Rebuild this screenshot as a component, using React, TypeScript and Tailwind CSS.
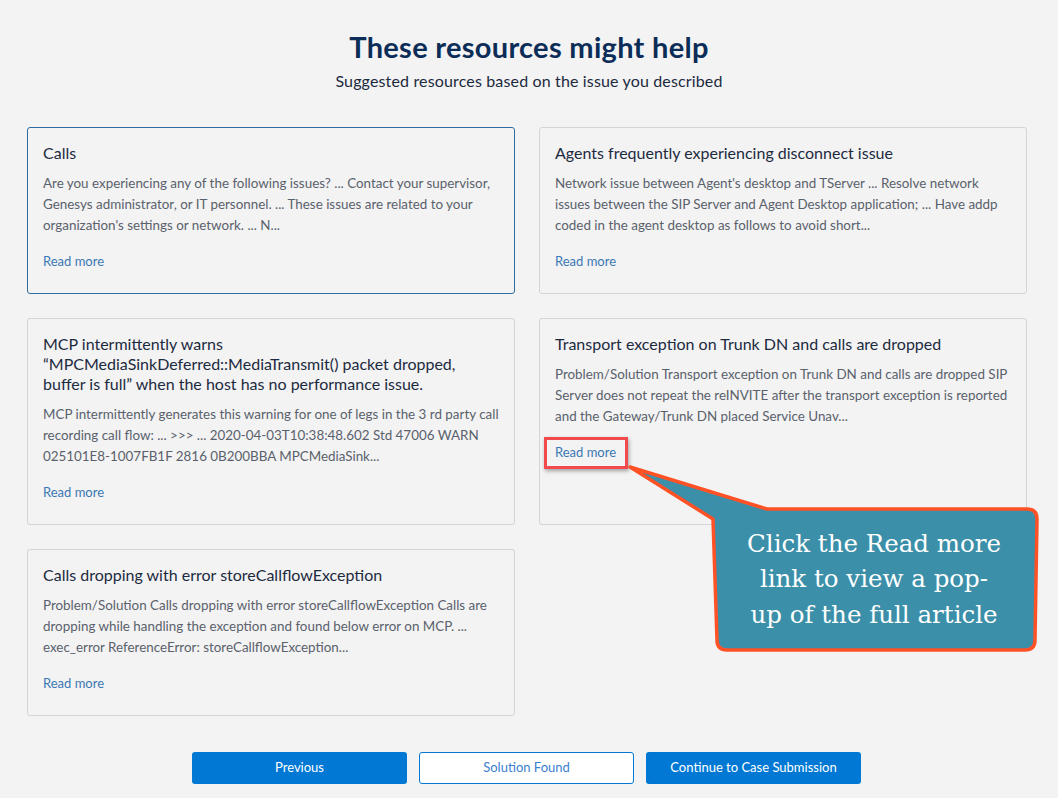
import React from 'react';

interface Resource {
  title: React.ReactNode;
  body: string;
  selected?: boolean;
  highlight?: boolean;
}

const RESOURCES: Resource[] = [
  {
    title: 'Calls',
    body: "Are you experiencing any of the following issues? ... Contact your supervisor, Genesys administrator, or IT personnel. ... These issues are related to your organization's settings or network. ... N...",
    selected: true,
  },
  {
    title: 'Agents frequently experiencing disconnect issue',
    body: "Network issue between Agent's desktop and TServer ... Resolve network issues between the SIP Server and Agent Desktop application; ... Have addp coded in the agent desktop as follows to avoid short...",
  },
  {
    title: (
      <>
        MCP intermittently warns
        <br />
        “MPCMediaSinkDeferred::MediaTransmit() packet dropped, buffer is full” when the host has no performance issue.
      </>
    ),
    body: 'MCP intermittently generates this warning for one of legs in the 3 rd party call recording call flow: ... >>> ... 2020-04-03T10:38:48.602 Std 47006 WARN 025101E8-1007FB1F 2816 0B200BBA MPCMediaSink...',
  },
  {
    title: 'Transport exception on Trunk DN and calls are dropped',
    body: 'Problem/Solution Transport exception on Trunk DN and calls are dropped SIP Server does not repeat the reINVITE after the transport exception is reported and the Gateway/Trunk DN placed Service Unav...',
    highlight: true,
  },
  {
    title: 'Calls dropping with error storeCallflowException',
    body: 'Problem/Solution Calls dropping with error storeCallflowException Calls are dropping while handling the exception and found below error on MCP. ... exec_error ReferenceError: storeCallflowException...',
  },
];

const ResourceCard = ({ item }: { item: Resource }) => (
  <div
    className={`flex flex-col rounded-[3px] border bg-[#f3f3f3] px-[15px] pt-[15px] pb-[21px] ${
      item.selected ? 'border-[#2f6b9e]' : 'border-[#d5d5d5]'
    }`}
  >
    <h3 className="text-[16px] leading-[20px] text-[#1c2a40]">{item.title}</h3>
    <p className="mt-[10px] text-[13.4px] leading-[21px] text-[#5a616c]">{item.body}</p>
    <div className="mt-[15px] flex flex-1 items-start">
      <a href="#" className="relative text-[13px] leading-[21px] text-[#3b78b3]">
        Read more
        {item.highlight && (
          <span className="pointer-events-none absolute -top-[5px] -bottom-[6px] -left-[11px] -right-[12px] border-[3px] border-[#f04a4f] shadow-[1px_2px_4px_rgba(0,0,0,0.35)]" />
        )}
      </a>
    </div>
  </div>
);

export default function App() {
  return (
    <div
      className="relative min-h-screen bg-[#f3f3f3] pt-[30px]"
      style={{ fontFamily: 'Lato, "Open Sans", sans-serif' }}
    >
      <h1 className="text-center text-[29px] font-bold leading-[34px] tracking-[0.3px] text-[#0c2d57]">
        These resources might help
      </h1>
      <p className="mt-[7px] text-center text-[16px] leading-[20px] tracking-[0.15px] text-[#1c2a40]">
        Suggested resources based on the issue you described
      </p>

      <div className="ml-[27px] mt-[36px] grid w-[1000px] grid-cols-2 gap-6">
        {RESOURCES.map((r, i) => (
          <ResourceCard key={i} item={r} />
        ))}
      </div>

      <div className="mt-[36px] flex justify-center gap-3 pb-[14px] pr-[5px]">
        <button className="h-[32px] w-[215px] rounded-[3px] bg-[#0078d4] text-[13px] text-white">
          Previous
        </button>
        <button className="h-[32px] w-[215px] rounded-[3px] border border-[#0078d4] bg-white text-[13px] text-[#3a7fcf]">
          Solution Found
        </button>
        <button className="h-[32px] w-[215px] rounded-[3px] bg-[#0078d4] text-[13px] text-white">
          Continue to Case Submission
        </button>
      </div>

      {/* callout annotation */}
      <svg
        className="pointer-events-none absolute left-0 top-0"
        width="1058"
        height="798"
        viewBox="0 0 1058 798"
      >
        <path
          d="M630 467 L767 509 L1027 509 Q1037 509 1037 519 L1035 640 Q1035 650 1025 650 L727 650 Q717 650 717 640 L713 519 Z"
          fill="#3b8fa9"
          stroke="#ff5126"
          strokeWidth="3.5"
          strokeLinejoin="round"
        />
      </svg>
      <div
        className="pointer-events-none absolute left-[714px] top-[510px] flex h-[138px] w-[320px] items-center justify-center text-center text-[24.5px] leading-[35.5px] text-white"
        style={{ fontFamily: '"DejaVu Serif", serif' }}
      >
        <span>
          Click the Read more
          <br />
          link to view a pop-
          <br />
          up of the full article
        </span>
      </div>
    </div>
  );
}
